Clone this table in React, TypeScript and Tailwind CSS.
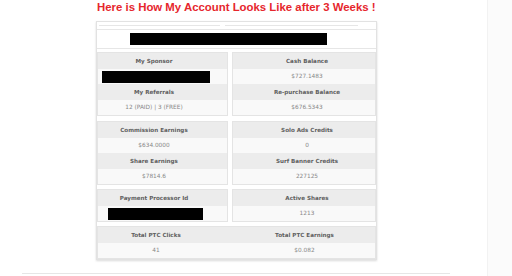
import React from 'react'

type Cell = { label: string; value?: string; redacted?: number }

function Box({ cells, side }: { cells: Cell[]; side: 'left' | 'right' }) {
  const pad = side === 'left' ? 'pr-[17px]' : 'pl-[6px]'
  return (
    <div className="border border-[#e4e4e4]">
      {cells.map((c) => (
        <div key={c.label}>
          <div className={`flex h-[16px] items-center justify-center bg-[#ececec] text-[5.6px] font-bold text-[#5f5f5f] ${pad}`}>
            {c.label}
          </div>
          {c.redacted ? (
            <div className="flex h-[15px] items-center bg-[#f9f9f9]">
              <div className="h-[12px] bg-black" style={{ marginLeft: c.redacted === 108 ? 4 : 10, width: c.redacted }} />
            </div>
          ) : (
            <div className={`flex h-[15px] items-center justify-center bg-[#f9f9f9] text-[5.8px] text-[#888] ${pad}`}>
              {c.value}
            </div>
          )}
        </div>
      ))}
    </div>
  )
}

function Section({ left, right, className = '' }: { left: Cell[]; right: Cell[]; className?: string }) {
  return (
    <div className={`grid grid-cols-[131px_1fr] gap-x-[4px] ${className}`}>
      <Box cells={left} side="left" />
      <Box cells={right} side="right" />
    </div>
  )
}

export default function App() {
  return (
    <div className="flex h-[276px] w-[512px] overflow-hidden bg-white font-['DejaVu_Sans',sans-serif]">
      <div className="w-[487px]">
        <h1 className="pl-[97px] pt-[1px] font-['Liberation_Sans',Arial,sans-serif] text-[11.4px] font-bold leading-[13px] text-[#e6262d]">
          Here is How My Account Looks Like after 3 Weeks !
        </h1>

        <div className="ml-[96px] mt-[7px] w-[281px] border border-[#e2e2e2] bg-white shadow-[0_1px_2px_rgba(0,0,0,0.15)]">
          {/* cut-off row from above */}
          <div className="flex h-[8px] items-end gap-[5px] border-b border-[#e6e6e6] px-[2px] pb-[3px]">
            <div className="h-px w-[121px] bg-[#e6e6e6]" />
            <div className="h-px w-[133px] bg-[#e6e6e6]" />
          </div>
          <div className="flex h-[19px] items-center border-b border-[#e6e6e6]">
            <div className="ml-[33px] h-[12px] w-[197px] bg-black" />
          </div>

          <Section
            className="mt-[3px]"
            left={[
              { label: 'My Sponsor', redacted: 108 },
              { label: 'My Referrals', value: '12 (PAID) | 3 (FREE)' },
            ]}
            right={[
              { label: 'Cash Balance', value: '$727.1483' },
              { label: 'Re-purchase Balance', value: '$676.5343' },
            ]}
          />
          <Section
            className="mt-[5px]"
            left={[
              { label: 'Commission Earnings', value: '$634.0000' },
              { label: 'Share Earnings', value: '$7814.6' },
            ]}
            right={[
              { label: 'Solo Ads Credits', value: '0' },
              { label: 'Surf Banner Credits', value: '227125' },
            ]}
          />
          <Section
            className="mt-[4px]"
            left={[{ label: 'Payment Processor Id', redacted: 95 }]}
            right={[{ label: 'Active Shares', value: '1213' }]}
          />

          <div className="mt-[4px] border border-[#e4e4e4]">
            <div className="flex h-[16px] items-center bg-[#ececec] text-[5.6px] font-bold text-[#5f5f5f]">
              <span className="w-[116px] text-center">Total PTC Clicks</span>
              <span className="ml-[20px] flex-1 text-center">Total PTC Earnings</span>
            </div>
            <div className="flex h-[15px] items-center bg-[#f9f9f9] text-[5.8px] text-[#888]">
              <span className="w-[116px] text-center">41</span>
              <span className="ml-[20px] flex-1 text-center">$0.082</span>
            </div>
          </div>
        </div>

        <div className="ml-[22px] mt-[13px] h-px w-[428px] bg-[#e6e6e6]" />
      </div>
      <div className="flex-1 border-l border-[#f2f2f2] bg-[#fbfbfb]" />
    </div>
  )
}
